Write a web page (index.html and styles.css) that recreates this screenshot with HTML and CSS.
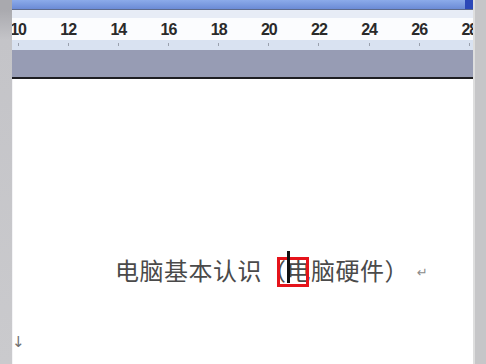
FILE: index.html
```html
<!DOCTYPE html>
<html lang="zh">
<head>
<meta charset="utf-8">
<link rel="stylesheet" href="styles.css">
</head>
<body>
<div class="screen">
  <div class="side side-left"></div>
  <div class="main">
    <div class="titlebar"></div>
    <div class="sep"></div>
    <div class="band-light"></div>
    <div class="ruler">
      <div class="ruler-row">
        <span class="num">10</span><span class="num">12</span><span class="num">14</span><span class="num">16</span><span class="num">18</span><span class="num">20</span><span class="num">22</span><span class="num">24</span><span class="num">26</span><span class="num">28</span>
      </div>
    </div>
    <div class="ticks">
      <div class="ruler-row">
        <span class="tick"></span><span class="tick"></span><span class="tick"></span><span class="tick"></span><span class="tick"></span><span class="tick"></span><span class="tick"></span><span class="tick"></span><span class="tick"></span><span class="tick"></span>
      </div>
    </div>
    <div class="band-grey"></div>
    <div class="band-black"></div>
    <div class="page">
      <p class="line">电脑基本认识（<span class="sel">电<span class="box"></span><span class="caret"></span></span>脑硬件）<span class="ret">↵</span></p>
      <div class="bottom-mark">↓</div>
    </div>
  </div>
  <div class="side side-right"></div>
</div>
</body>
</html>
```

FILE: styles.css
```css
html, body {
  margin: 0;
  padding: 0;
  background: #ffffff;
}

.screen {
  display: flex;
  width: 486px;
  height: 364px;
  overflow: hidden;
}

.side {
  flex: none;
}

.side-left {
  width: 12px;
  background: linear-gradient(to bottom, #a9a9ae 0, #a9a9ae 9px, #c4c4c8 40px, #cacacd 100%);
}

.side-right {
  width: 13px;
  background: #c6c6c8;
  border-left: 2px solid #dedede;
  box-sizing: border-box;
}

.main {
  flex: 1;
  display: flex;
  flex-direction: column;
  min-width: 0;
}

.titlebar {
  height: 9px;
  background: linear-gradient(to bottom, #8cabea, #6b8bd6);
  border-right: 8px solid #2c48b8;
}

.sep {
  height: 1px;
  background: #5d6a8c;
}

.band-light {
  height: 8px;
  background: #e7ecf6;
}

.ruler {
  height: 22px;
  background: #fbfcfe;
  overflow: hidden;
}

.ruler-row {
  display: flex;
  margin-left: -19px;
}

.num {
  flex: none;
  width: 50.15px;
  text-align: center;
  font-family: "Liberation Sans", Arial, sans-serif;
  font-weight: bold;
  font-size: 16px;
  line-height: 22px;
  letter-spacing: -1px;
  color: #2a2a2a;
  padding-top: 1px;
}

.ticks {
  height: 10px;
  background: #d9e2f1;
  overflow: hidden;
}

.tick {
  flex: none;
  width: 50.15px;
  height: 10px;
  display: flex;
  justify-content: center;
  padding-top: 3px;
  box-sizing: border-box;
}

.tick::before {
  content: "";
  width: 1px;
  height: 3px;
  background: #9aa0ad;
}

.band-grey {
  height: 27px;
  background: #979cb4;
}

.band-black {
  height: 2px;
  background: #1e1e22;
}

.page {
  flex: 1;
  background: #ffffff;
  display: flex;
  flex-direction: column;
  padding-top: 175px;
  border-left: 1px solid #f4f4f6;
}

.line {
  margin: 0 0 0 102px;
  font-family: "Noto Sans CJK SC", "Noto Sans CJK TC", sans-serif;
  font-size: 24px;
  line-height: 32px;
  letter-spacing: 0.5px;
  color: #4a4a4a;
  white-space: nowrap;
}

.sel {
  position: relative;
}

.box {
  position: absolute;
  left: -10px;
  top: 5px;
  width: 32px;
  height: 30px;
  border: 3px solid #e5141b;
  box-sizing: border-box;
}

.caret {
  position: absolute;
  left: 0px;
  top: -1px;
  width: 3px;
  height: 32px;
  background: #111;
}

.ret {
  font-family: "DejaVu Sans", sans-serif;
  font-size: 13px;
  color: #8a8a8a;
  letter-spacing: 0;
  margin-left: 8px;
  vertical-align: 3px;
}

.bottom-mark {
  margin-top: 45px;
  margin-left: -1px;
  font-family: "DejaVu Sans", sans-serif;
  font-size: 15px;
  line-height: 16px;
  color: #707070;
}
```
